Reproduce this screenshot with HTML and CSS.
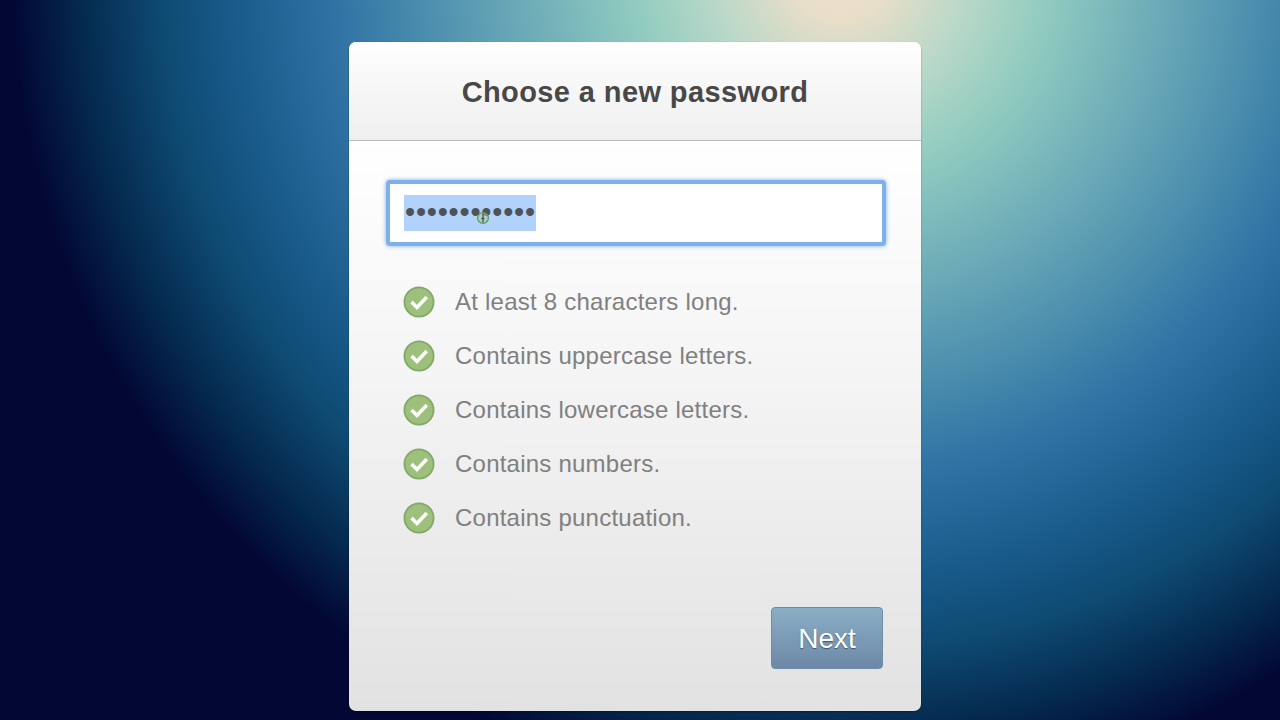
FILE: index.html
```html
<!DOCTYPE html>
<html lang="en">
<head>
<meta charset="utf-8">
<title>Choose a new password</title>
<link rel="stylesheet" href="styles.css">
</head>
<body>
<main class="stage">
  <section class="card">
    <header class="card-head"><h1>Choose a new password</h1></header>
    <div class="card-body">
      <div class="field">
        <span class="selection">
          <span class="dots">••••••••••••</span>
          <svg class="cursor" viewBox="0 0 14 14" aria-hidden="true"><circle cx="7" cy="7" r="5.4" fill="#a9c9a0" fill-opacity=".55" stroke="#5f9a68" stroke-width="1.3"/><path d="M7 2.5v9" stroke="#3c4a3c" stroke-width="1.2"/><path d="M5.4 7.5h3" stroke="#3c4a3c" stroke-width="1"/></svg>
        </span>
      </div>
      <ul class="rules">
        <li class="rule"><svg class="check" viewBox="0 0 32 32" aria-hidden="true"><circle cx="16" cy="16" r="14.6" fill="#9dc07c" stroke="#83a86c" stroke-width="1.8"/><path d="M8.5 16l5.5 5.5 9.8-10.5" fill="none" stroke="#fff" stroke-width="3.6"/></svg><span>At least 8 characters long.</span></li>
        <li class="rule"><svg class="check" viewBox="0 0 32 32" aria-hidden="true"><circle cx="16" cy="16" r="14.6" fill="#9dc07c" stroke="#83a86c" stroke-width="1.8"/><path d="M8.5 16l5.5 5.5 9.8-10.5" fill="none" stroke="#fff" stroke-width="3.6"/></svg><span>Contains uppercase letters.</span></li>
        <li class="rule"><svg class="check" viewBox="0 0 32 32" aria-hidden="true"><circle cx="16" cy="16" r="14.6" fill="#9dc07c" stroke="#83a86c" stroke-width="1.8"/><path d="M8.5 16l5.5 5.5 9.8-10.5" fill="none" stroke="#fff" stroke-width="3.6"/></svg><span>Contains lowercase letters.</span></li>
        <li class="rule"><svg class="check" viewBox="0 0 32 32" aria-hidden="true"><circle cx="16" cy="16" r="14.6" fill="#9dc07c" stroke="#83a86c" stroke-width="1.8"/><path d="M8.5 16l5.5 5.5 9.8-10.5" fill="none" stroke="#fff" stroke-width="3.6"/></svg><span>Contains numbers.</span></li>
        <li class="rule"><svg class="check" viewBox="0 0 32 32" aria-hidden="true"><circle cx="16" cy="16" r="14.6" fill="#9dc07c" stroke="#83a86c" stroke-width="1.8"/><path d="M8.5 16l5.5 5.5 9.8-10.5" fill="none" stroke="#fff" stroke-width="3.6"/></svg><span>Contains punctuation.</span></li>
      </ul>
      <div class="actions"><button class="next" type="button">Next</button></div>
    </div>
  </section>
</main>
</body>
</html>
```
FILE: styles.css
```css
* { box-sizing: border-box; }
html, body { margin: 0; height: 100%; overflow: hidden; }
body {
  font-family: "Liberation Sans", Arial, sans-serif;
  background: radial-gradient(circle 830px at 840px -30px,
    #f0e2cc 0, #e8dec8 50px, #b8d8c8 130px, #94cdc0 200px, #7fbcbc 260px, #5f9fb4 360px, #4387ab 440px, #3274a5 500px,
    #185a8a 610px, #0e4a72 680px, #05294f 760px, #020733 830px);
  background-color: #020733;
}
.stage {
  height: 720px;
  padding: 42px 10px 9px 0;
  display: flex;
  justify-content: center;
}
.card {
  width: 572px;
  display: flex;
  flex-direction: column;
  border-radius: 7px;
  overflow: hidden;
  background: linear-gradient(#ffffff 14%, #f6f6f6 45%, #e2e2e2 100%);
  box-shadow: 0 1px 2px rgba(0,0,0,.35);
}
.card-head {
  height: 99px;
  flex: none;
  display: flex;
  align-items: center;
  justify-content: center;
  padding-top: 2px;
  background: linear-gradient(#fefefe, #efefef);
  border-bottom: 1px solid #bdbdbd;
}
h1 {
  margin: 0;
  font-size: 29px;
  font-weight: 700;
  color: #484848;
  letter-spacing: .39px;
}
.card-body {
  flex: 1;
  display: flex;
  flex-direction: column;
  padding: 39px 36px 42px 37px;
}
.field {
  height: 66px;
  width: 500px;
  flex: none;
  display: flex;
  align-items: center;
  padding-left: 14px;
  background: #fff;
  border: 4px solid #7eb0ea;
  border-radius: 4px;
  box-shadow: 0 0 4px rgba(110,165,230,.9);
}
.selection {
  position: relative;
  width: 132px;
  height: 36px;
  background: #b1d2fb;
  display: flex;
  align-items: center;
}
.dots {
  font-size: 29px;
  line-height: 34px;
  height: 36px;
  padding-left: 1px;
  color: #4f5358;
  letter-spacing: .75px;
  white-space: nowrap;
}
.cursor {
  position: absolute;
  left: 72px;
  top: 16px;
  width: 14px;
  height: 14px;
}
.rules {
  list-style: none;
  margin: 40px 0 0;
  padding: 0 0 0 17px;
  display: flex;
  flex-direction: column;
  gap: 22px;
}
.rule {
  height: 32px;
  display: flex;
  align-items: center;
  gap: 20px;
  font-size: 24px;
  letter-spacing: .23px;
  color: #808080;
}
.check { width: 32px; height: 32px; flex: none; }
.actions {
  margin-top: auto;
  display: flex;
  justify-content: flex-end;
  padding-right: 2px;
}
.next {
  width: 112px;
  height: 62px;
  padding-top: 2px;
  border: 1px solid #6f8ca6;
  border-radius: 4px;
  background: linear-gradient(#8aaec6, #6e88a6);
  color: #fff;
  font-family: inherit;
  font-size: 28px;
  text-shadow: 0 1px 1px rgba(50,70,90,.8);
}
```
